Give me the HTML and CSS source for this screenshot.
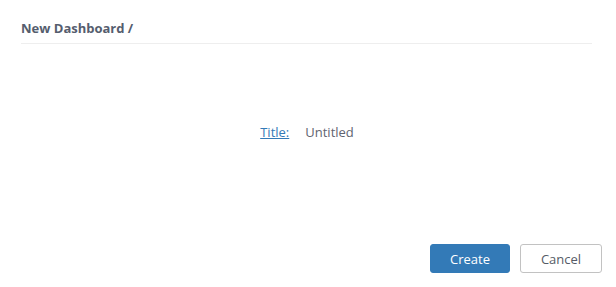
FILE: index.html
```html
<!DOCTYPE html>
<html lang="en">
<head>
    <meta charset="UTF-8">
    <title>New Dashboard</title>
    <link rel="stylesheet" href="styles.css">
</head>
<body>
<div class="dialog">
    <div class="dialog-header">New Dashboard /</div>
    <div class="dialog-body">
        <a class="field-label" href="#">Title:</a>
        <span class="field-value">Untitled</span>
    </div>
    <div class="dialog-footer">
        <button class="btn btn-primary">Create</button>
        <button class="btn btn-default">Cancel</button>
    </div>
</div>
</body>
</html>
```

FILE: styles.css
```css
html, body {
    margin: 0;
    height: 100%;
    background: #fff;
}
body {
    font-family: "Open Sans", Arial, sans-serif;
    color: #555b66;
}
.dialog {
    box-sizing: border-box;
    height: 287px;
    padding: 0 14px 14px 21px;
    display: flex;
    flex-direction: column;
}
.dialog-header {
    margin-top: 21px;
    margin-right: 10px;
    padding-bottom: 7px;
    border-bottom: 1px solid #eeeeee;
    font-size: 13px;
    font-weight: bold;
    color: #555d6e;
    line-height: 15px;
}
.dialog-body {
    flex: 1;
    display: flex;
    justify-content: center;
    align-items: center;
    gap: 16px;
    font-size: 13px;
    padding-bottom: 24px;
    padding-right: 9px;
}
.field-label {
    color: #337ab7;
    text-decoration: underline;
}
.field-value {
    color: #5f6470;
}
.dialog-footer {
    display: flex;
    justify-content: flex-end;
    gap: 10px;
}
.btn {
    font-family: "Open Sans", Arial, sans-serif;
    font-size: 13px;
    height: 29px;
    border-radius: 3px;
    cursor: pointer;
}
.btn-primary {
    width: 80px;
    background: #337ab7;
    border: 1px solid #337ab7;
    color: #fff;
}
.btn-default {
    width: 82px;
    background: #fff;
    border: 1px solid #c2c2c2;
    color: #555b66;
}
```
